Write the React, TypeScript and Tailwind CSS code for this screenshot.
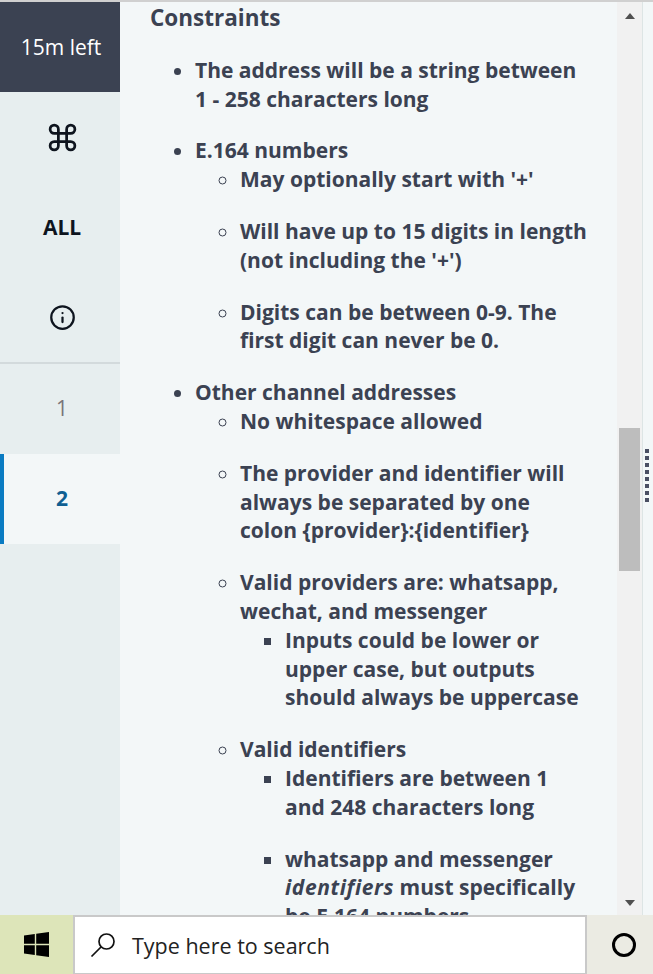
import { Command, Info } from "lucide-react";

const Sidebar = () => {
    return (
        <aside className="w-[120px] shrink-0 flex flex-col bg-[#e7eeef]">
            <div className="h-[90px] flex items-center justify-center pl-[2px] pt-[2px] bg-[#3b4252] text-white text-[21px]">15m left</div>
            <div className="h-[90px] flex items-center justify-center pl-1 text-[#0e141e]">
                <Command size={33} strokeWidth={2} />
            </div>
            <div className="h-[90px] flex items-center justify-center pl-1 pt-[2px] text-[#0e141e] text-[21px] font-bold">ALL</div>
            <div className="h-[90px] flex items-center justify-center pl-1 text-[#0e141e]">
                <Info size={27} strokeWidth={2} />
            </div>
            <div className="h-[92px] flex items-center justify-center pl-1 border-t-2 border-[#d3dadc] text-[#7a7479] text-[21px]">1</div>
            <div className="h-[90px] flex items-center justify-center border-l-4 border-[#0a7bc2] bg-[#f3f7f8] text-[#0f5f92] text-[21px] font-bold">2</div>
        </aside>
    );
};

const Content = () => {
    return (
        <main className="flex-1 min-w-0 overflow-hidden bg-[#f3f7f8] pl-[30px] text-[#3b4252] text-[21px] leading-[28.8px] font-bold">
            <h2 className="mt-[2px] text-[22.5px] font-bold">Constraints</h2>
            <ul className="list-disc pl-[45px] mt-[23px] space-y-[23px]">
                <li>The address will be a string between<br />1 - 258 characters long</li>
                <li>
                    E.164 numbers
                    <ul className="list-[circle] pl-[45px] space-y-[23px]">
                        <li>May optionally start with '+'</li>
                        <li>Will have up to 15 digits in length<br />(not including the '+')</li>
                        <li>Digits can be between 0-9. The<br />first digit can never be 0.</li>
                    </ul>
                </li>
                <li>
                    Other channel addresses
                    <ul className="list-[circle] pl-[45px] space-y-[23px]">
                        <li>No whitespace allowed</li>
                        <li>The provider and identifier will<br />always be separated by one<br />colon {"{provider}:{identifier}"}</li>
                        <li>
                            Valid providers are: whatsapp,<br />wechat, and messenger
                            <ul className="list-[square] pl-[45px]">
                                <li>Inputs could be lower or<br />upper case, but outputs<br />should always be uppercase</li>
                            </ul>
                        </li>
                        <li>
                            Valid identifiers
                            <ul className="list-[square] pl-[45px] space-y-[23px]">
                                <li>Identifiers are between 1<br />and 248 characters long</li>
                                <li>whatsapp and messenger<br /><em className="tracking-[0.6px]">identifiers</em> must specifically<br />be E.164 numbers</li>
                            </ul>
                        </li>
                    </ul>
                </li>
            </ul>
        </main>
    );
};

const Scrollbar = () => {
    return (
        <div className="w-[25px] shrink-0 flex flex-col items-center bg-[#f1f1f1] pt-[11px] pb-[9px]">
            <div className="w-0 h-0 border-x-[5px] border-x-transparent border-b-[6px] border-b-[#505050]" />
            <div className="w-[21px] h-[143px] mt-[409px] bg-[#bdbdbd]" />
            <div className="w-0 h-0 mt-auto border-x-[5px] border-x-transparent border-t-[6px] border-t-[#505050]" />
        </div>
    );
};

const Handle = () => {
    return (
        <div className="w-[11px] shrink-0 border-l border-[#dde5e5] bg-[#f3f7f8] pl-[2px] pt-[447px] flex flex-col gap-[3px]">
            {[0, 1, 2, 3, 4, 5, 6, 7].map(i => (
                <div key={i} className="w-[4px] h-[4px] bg-[#4a4f63]" />
            ))}
        </div>
    );
};

const Taskbar = () => {
    return (
        <footer className="h-[59px] shrink-0 flex">
            <div className="w-[73px] flex items-center justify-center bg-[#dde5b9]">
                <svg width="26" height="25" viewBox="0 0 26 25" fill="#000">
                    <path d="M0 3.6 10.8 2v9.8H0zM12.2 1.8 25 0v11.8H12.2zM0 13.2h10.8V23L0 21.4zM12.2 13.2H25V25l-12.8-1.8z" />
                </svg>
            </div>
            <div className="w-[514px] flex items-center bg-white border-2 border-[#c9c9c9] border-b-[1px] pl-[15px] text-[#222] text-[21.5px] font-['Open_Sans',sans-serif]">
                <svg width="26" height="26" viewBox="0 0 26 26" fill="none" stroke="#111" strokeWidth="1.7" className="mr-[16px]">
                    <circle cx="16.5" cy="9.5" r="7.5" />
                    <path d="M11 15 1.5 24.5" />
                </svg>
                <span className="pt-[3px]">Type here to search</span>
            </div>
            <div className="flex-1 flex items-center justify-center pl-2 bg-[#ebebe3]">
                <div className="w-[24px] h-[24px] rounded-full border-[3px] border-black" />
            </div>
        </footer>
    );
};

const App = () => {
    return (
        <div className="w-[653px] h-[974px] flex flex-col overflow-hidden font-['Open_Sans',sans-serif]">
            <div className="h-[2px] shrink-0 bg-[#d0d0d0]" />
            <div className="flex-1 min-h-0 flex">
                <Sidebar />
                <Content />
                <Scrollbar />
                <Handle />
            </div>
            <Taskbar />
        </div>
    );
};

export default App;
